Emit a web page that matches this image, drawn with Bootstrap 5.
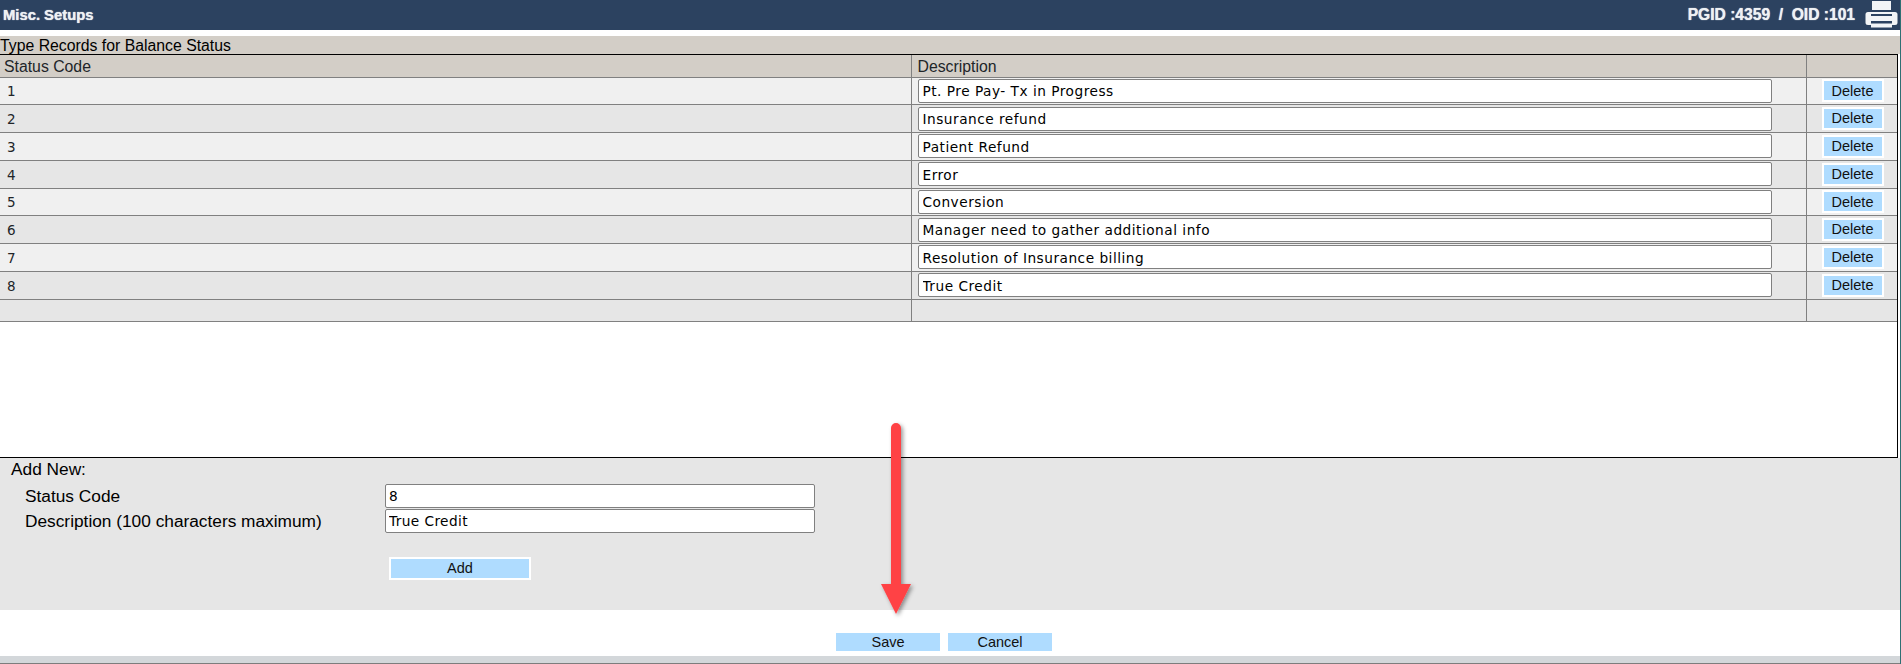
<!DOCTYPE html>
<html lang="en">
<head>
<meta charset="utf-8">
<title>Misc. Setups</title>
<link href="https://cdn.jsdelivr.net/npm/bootstrap@5.3.0/dist/css/bootstrap.min.css" rel="stylesheet">
<style>
html,body{height:664px;overflow:hidden;background:#fff;}
body{font-family:"Liberation Sans",Arial,sans-serif;color:#000;position:relative;font-size:15px;border-right:1px solid #2f6f73;}
.topbar{height:30px;background:#2c4260;color:#eef1f4;font-weight:700;font-size:14.8px;padding:0 2px 0 3px;text-shadow:0 0 1px #fff;}
.topbar-right{gap:9px;font-size:15.6px;}
.printer{width:34px;height:28px;display:block;}
.title-strip{margin-top:6px;height:18px;background:#d3cec7;font-size:15.8px;line-height:19px;}
.list-box{height:404px;width:1899px;margin-left:-1px;border:1px solid #000;overflow:hidden;background:#fff;}
.grid-table{table-layout:fixed;width:1897px;margin:0;border-collapse:collapse;}
.grid-table>*>tr>*{padding:0;border:0;border-bottom:1px solid #808080;border-right:1px solid #808080;box-shadow:none;vertical-align:middle;}
.grid-table>*>tr>*:last-child{border-right:0;}
.grid-table th{background:#d3cec7;font-weight:400;font-size:15.8px;height:22px;padding:2px 0 0 4px!important;line-height:18px;}
.grid-table th:nth-child(2){padding-left:6px!important;}
.grid-table tr>td{height:27.75px;font-family:"DejaVu Sans",Verdana,sans-serif;font-size:13.5px;}
.grid-table .row-odd>td{background:#f0f0f0;}
.grid-table .row-even>td{background:#e6e6e6;}
.grid-table td.code-cell{padding-left:7px;padding-top:1px;}
.grid-table tr.filler>td{height:22px;}
.cell-input{display:block;width:854px;height:24px;margin-left:6px;border:1px solid #808080;border-radius:2px;background:#fff;font-family:"DejaVu Sans",Verdana,sans-serif;font-size:13.7px;letter-spacing:.5px;padding:1px 4px 0;color:#000;outline:0;}
.pale-btn{background:#afdcff;border:2px solid #fff;border-radius:0;color:#111;font-family:"Liberation Sans",Arial,sans-serif;font-size:14.5px;line-height:1;padding:0;}
.del-btn{display:block;width:62px;height:23px;margin-left:15px;}
.add-panel{height:152px;background:#e6e6e6;padding:1px 0 0 11px;font-size:17.3px;line-height:20px;}
.add-grid{margin-top:4px;padding-left:14px;}
.add-row{height:25px;}
.add-label{width:360px;}
.add-input{width:430px;height:24px;border:1px solid #808080;border-radius:2px;background:#fff;font-family:"DejaVu Sans",Verdana,sans-serif;font-size:13.7px;letter-spacing:.4px;padding:1px 3px 0;outline:0;color:#000;}
.add-btn{display:block;width:142px;height:23px;margin:24px 0 0 378px;}
.footer-row{height:46px;padding-top:23px;gap:8px;padding-left:836px;}
.foot-btn{width:104px;height:18px;border:0;}
.base-strip{height:8px;background:#d3d7da;border-bottom:1px solid #7d7d7d;}
.arrow{position:absolute;left:875px;top:418px;width:44px;height:204px;}
</style>
</head>
<body>
<div class="topbar d-flex align-items-center justify-content-between">
  <span>Misc. Setups</span>
  <div class="topbar-right d-flex align-items-center">
    <span>PGID :4359 &nbsp;/&nbsp; OID :101</span>
    <svg class="printer" viewBox="0 0 34 28" fill="#f2f4f6"><path d="M8 -2h19v11h-19z"/><path fill-rule="evenodd" d="M4 11h27a2.500 2.500 0 0 1 2.500 2.500v8a2.500 2.500 0 0 1-2.500 2.500h-3v-4H7v4H4a2.500 2.500 0 0 1-2.500-2.500v-8A2.500 2.500 0 0 1 4 11zM7 13v2h21v-2z"/><path d="M7 22.500h21v4H7z"/></svg>
  </div>
</div>
<div class="title-strip">Type Records for Balance Status</div>
<div class="list-box">
  <table class="table grid-table">
    <colgroup><col style="width:911px"><col style="width:895px"><col></colgroup>
    <thead><tr><th>Status Code</th><th>Description</th><th></th></tr></thead>
    <tbody>
      <tr class="row-odd"><td class="code-cell">1</td><td><input class="cell-input" value="Pt. Pre Pay- Tx in Progress"></td><td><button class="pale-btn del-btn">Delete</button></td></tr>
      <tr class="row-even"><td class="code-cell">2</td><td><input class="cell-input" value="Insurance refund"></td><td><button class="pale-btn del-btn">Delete</button></td></tr>
      <tr class="row-odd"><td class="code-cell">3</td><td><input class="cell-input" value="Patient Refund"></td><td><button class="pale-btn del-btn">Delete</button></td></tr>
      <tr class="row-even"><td class="code-cell">4</td><td><input class="cell-input" value="Error"></td><td><button class="pale-btn del-btn">Delete</button></td></tr>
      <tr class="row-odd"><td class="code-cell">5</td><td><input class="cell-input" value="Conversion"></td><td><button class="pale-btn del-btn">Delete</button></td></tr>
      <tr class="row-even"><td class="code-cell">6</td><td><input class="cell-input" value="Manager need to gather additional info"></td><td><button class="pale-btn del-btn">Delete</button></td></tr>
      <tr class="row-odd"><td class="code-cell">7</td><td><input class="cell-input" value="Resolution of Insurance billing"></td><td><button class="pale-btn del-btn">Delete</button></td></tr>
      <tr class="row-even"><td class="code-cell">8</td><td><input class="cell-input" value="True Credit"></td><td><button class="pale-btn del-btn">Delete</button></td></tr>
      <tr class="row-even filler"><td></td><td></td><td></td></tr>
    </tbody>
  </table>
</div>
<div class="add-panel">
  <div>Add New:</div>
  <div class="add-grid">
    <div class="add-row d-flex align-items-center"><span class="add-label">Status Code</span><input class="add-input" value="8"></div>
    <div class="add-row d-flex align-items-center"><span class="add-label">Description (100 characters maximum)</span><input class="add-input" value="True Credit"></div>
  </div>
  <button class="pale-btn add-btn">Add</button>
</div>
<div class="footer-row d-flex">
  <button class="pale-btn foot-btn">Save</button>
  <button class="pale-btn foot-btn">Cancel</button>
</div>
<div class="base-strip"></div>
<svg class="arrow" viewBox="0 0 44 204"><defs><filter id="sh" x="-30%" y="-5%" width="170%" height="110%"><feDropShadow dx="2" dy="2" stdDeviation="2" flood-color="#000" flood-opacity=".4"/></filter></defs><path filter="url(#sh)" fill="#ff4245" d="M16 10a5 5 0 0 1 10 0V166H36L21 196 6 166H16z"/></svg>
</body>
</html>
